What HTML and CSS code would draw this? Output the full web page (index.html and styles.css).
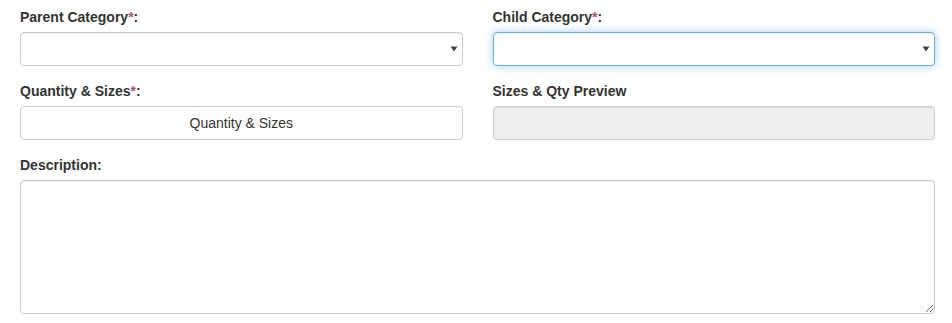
FILE: index.html
```html
<!DOCTYPE html>
<html lang="en">
<head>
    <meta charset="UTF-8">
    <title>Product Form</title>
    <link rel="stylesheet" href="styles.css">
</head>
<body>
    <form class="product-form">
        <!-- Categories -->
        <div class="row">
            <div class="form-group">
                <label>Parent Category<span class="req">*</span>:</label>
                <div class="select-wrap">
                    <select class="form-control"></select>
                    <svg class="caret" width="8" height="6" viewBox="0 0 8 6"><path d="M0.5 0.5h7L4 5.5z" fill="#444"/></svg>
                </div>
            </div>
            <div class="form-group">
                <label>Child Category<span class="req">*</span>:</label>
                <div class="select-wrap">
                    <select class="form-control focused"></select>
                    <svg class="caret" width="8" height="6" viewBox="0 0 8 6"><path d="M0.5 0.5h7L4 5.5z" fill="#444"/></svg>
                </div>
            </div>
        </div>

        <!-- Sizes -->
        <div class="row">
            <div class="form-group">
                <label>Quantity &amp; Sizes<span class="req">*</span>:</label>
                <button type="button" class="btn">Quantity &amp; Sizes</button>
            </div>
            <div class="form-group">
                <label>Sizes &amp; Qty Preview</label>
                <input type="text" class="form-control" disabled>
            </div>
        </div>

        <!-- Description -->
        <div class="form-group">
            <label>Description:</label>
            <textarea class="form-control" rows="6"></textarea>
        </div>
    </form>
</body>
</html>
```

FILE: styles.css
```css
/* General Styling */
body {
    margin: 0;
    font-family: "Liberation Sans", Arial, sans-serif;
    font-size: 14px;
    line-height: 20px;
    color: #333;
    background: #fff;
}

.product-form {
    padding: 7px 17px 0 20px;
}

.row {
    display: grid;
    grid-template-columns: 1fr 1fr;
    column-gap: 30px;
}

.form-group {
    margin-bottom: 15px;
}

label {
    display: block;
    font-weight: bold;
    margin-bottom: 5px;
}

.req {
    color: #b0506e;
}

/* Controls */
.form-control {
    display: block;
    box-sizing: border-box;
    width: 100%;
    height: 34px;
    padding: 6px 12px;
    font-family: inherit;
    font-size: 14px;
    line-height: 20px;
    color: #555;
    background: #fff;
    border: 1px solid #ccc;
    border-radius: 4px;
    box-shadow: inset 0 1px 1px rgba(0, 0, 0, 0.075);
    margin: 0;
}

select.form-control {
    appearance: none;
    -webkit-appearance: none;
}

.form-control.focused {
    border-color: #66afe9;
    box-shadow: inset 0 1px 1px rgba(0, 0, 0, 0.075), 0 0 8px rgba(102, 175, 233, 0.6);
}

input.form-control:disabled {
    background: #eee;
}

textarea.form-control {
    height: 134px;
    resize: vertical;
}

.select-wrap {
    position: relative;
}

.caret {
    position: absolute;
    right: 5px;
    top: 14px;
}

.btn {
    display: block;
    box-sizing: border-box;
    width: 100%;
    height: 34px;
    padding: 6px 12px;
    font-family: inherit;
    font-size: 14px;
    line-height: 20px;
    color: #333;
    background: #fff;
    border: 1px solid #ccc;
    border-radius: 4px;
    text-align: center;
}
```
